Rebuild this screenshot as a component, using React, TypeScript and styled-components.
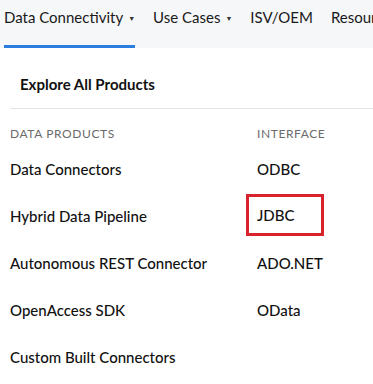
import React from "react";
import styled, { createGlobalStyle } from "styled-components";

const GlobalStyle = createGlobalStyle`
    body {
        margin: 0;
        background: #ffffff;
        font-family: "Lato", "Open Sans", sans-serif;
        color: #111111;
    }
`;

const NavBar = styled.nav`
    display: flex;
    height: 48px;
    background: #f6f7f9;
    padding-left: 4px;
    gap: 18px;
    overflow: hidden;
    white-space: nowrap;
`;

const NavItem = styled.div<{ $active?: boolean }>`
    display: flex;
    align-items: flex-start;
    padding-top: 8px;
    font-size: 15px;
    color: #1a1a1a;
    border-bottom: 3px solid ${(p) => (p.$active ? "#2b7de0" : "transparent")};
    box-sizing: border-box;
    height: 48px;
`;

const Caret = styled.span`
    font-size: 7px;
    margin-left: 5px;
    margin-top: 6px;
    color: #333;
`;

const Panel = styled.div`
    padding: 0 0 0 10px;
`;

const Heading = styled.h2`
    margin: 0;
    padding: 27px 0 15px 10px;
    font-size: 15px;
    font-weight: 700;
    border-bottom: 1px solid #e3e3e3;
`;

const Columns = styled.div`
    display: grid;
    grid-template-columns: 247px 1fr;
    padding-top: 17px;
`;

const Column = styled.div`
    display: flex;
    flex-direction: column;
`;

const ColumnTitle = styled.div`
    font-size: 12px;
    letter-spacing: 0.6px;
    color: #6b6b6b;
    text-transform: uppercase;
    height: 19px;
`;

const Link = styled.a`
    display: flex;
    align-items: center;
    height: 47px;
    font-size: 15px;
    font-weight: 500;
    color: #111;
    text-decoration: none;
`;

const Highlight = styled(Link)`
    width: 78px;
    height: 42px;
    margin: 2px 0 3px -11px;
    padding-left: 8px;
    border: 3px solid #d8222e;
    box-sizing: border-box;
`;

const products = [
    "Data Connectors",
    "Hybrid Data Pipeline",
    "Autonomous REST Connector",
    "OpenAccess SDK",
    "Custom Built Connectors",
];

const interfaces = ["ODBC", "JDBC", "ADO.NET", "OData"];

const App: React.FC = () => {
    return (
        <>
            <GlobalStyle />
            <NavBar>
                <NavItem $active>
                    Data Connectivity<Caret>▼</Caret>
                </NavItem>
                <NavItem>
                    Use Cases<Caret>▼</Caret>
                </NavItem>
                <NavItem>ISV/OEM</NavItem>
                <NavItem>Resources</NavItem>
            </NavBar>
            <Panel>
                <Heading>Explore All Products</Heading>
                <Columns>
                    <Column>
                        <ColumnTitle>Data Products</ColumnTitle>
                        {products.map((p) => (
                            <Link key={p} href="#">
                                {p}
                            </Link>
                        ))}
                    </Column>
                    <Column>
                        <ColumnTitle>Interface</ColumnTitle>
                        {interfaces.map((i) =>
                            i === "JDBC" ? (
                                <Highlight key={i} href="#">
                                    {i}
                                </Highlight>
                            ) : (
                                <Link key={i} href="#">
                                    {i}
                                </Link>
                            )
                        )}
                    </Column>
                </Columns>
            </Panel>
        </>
    );
};

export default App;
